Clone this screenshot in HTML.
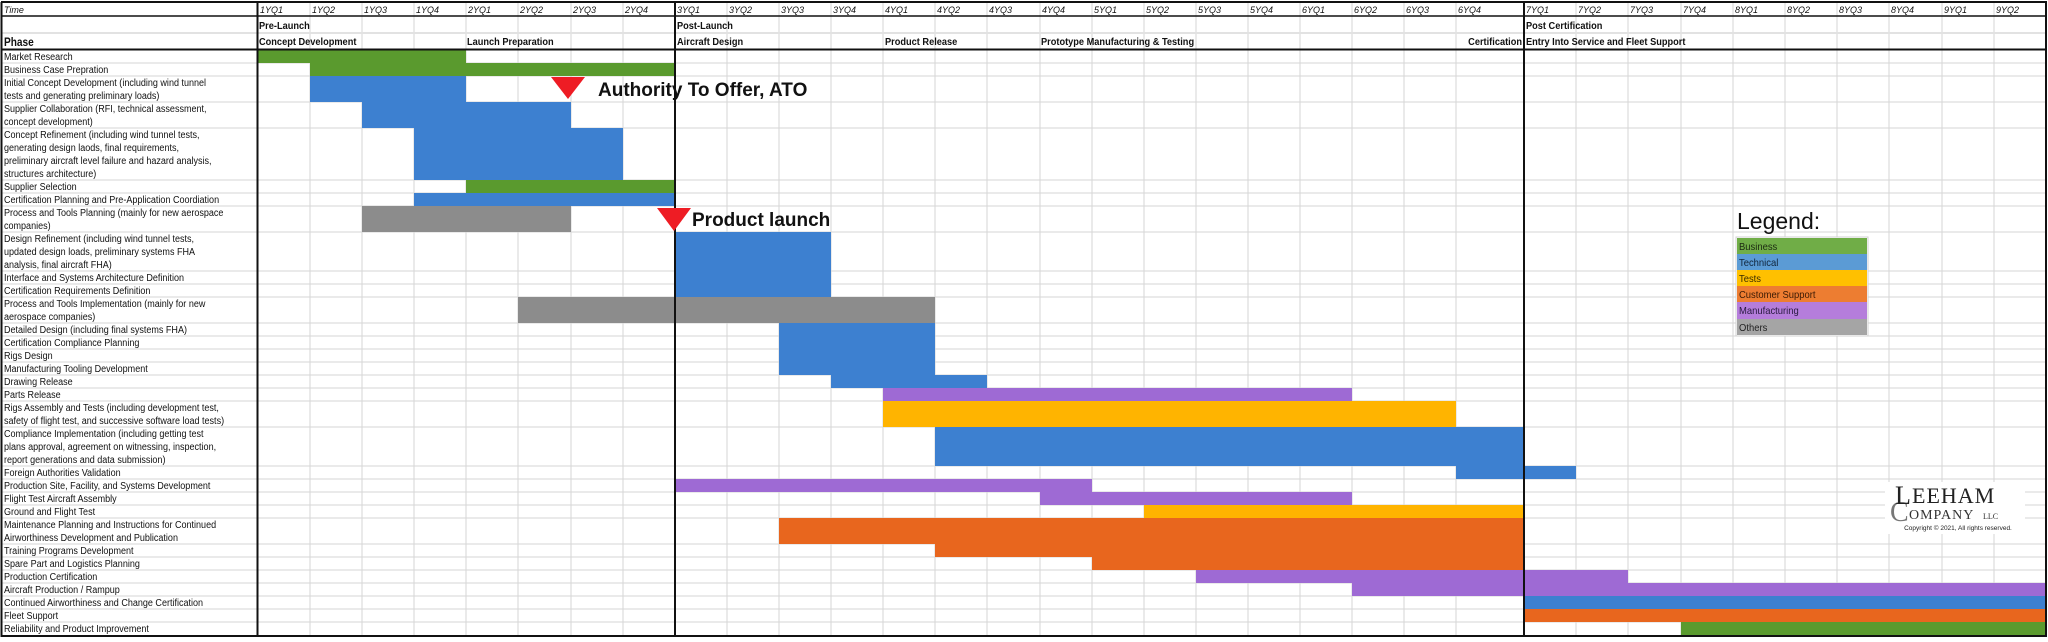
<!DOCTYPE html>
<html><head><meta charset="utf-8"><style>
html,body{margin:0;padding:0;background:#fff;width:2048px;height:642px;overflow:hidden}
svg text{font-family:"Liberation Sans",Arial,sans-serif;fill:#111}
.l{font-size:10.5px}
.q{font-size:9px;font-style:italic}
.b{font-size:10.5px;font-weight:bold}
</style></head><body>
<svg width="2048" height="642" viewBox="0 0 2048 642" xmlns="http://www.w3.org/2000/svg">
<g stroke="#d6d6d6" stroke-width="1">
<path d="M310 3V636M362 3V636M414 3V636M466 3V636M518 3V636M571 3V636M623 3V636M727 3V636M779 3V636M831 3V636M883 3V636M935 3V636M987 3V636M1040 3V636M1092 3V636M1144 3V636M1196 3V636M1248 3V636M1300 3V636M1352 3V636M1404 3V636M1456 3V636M1576 3V636M1628 3V636M1681 3V636M1733 3V636M1785 3V636M1837 3V636M1889 3V636M1942 3V636M1994 3V636"/>
<path d="M2 63H2046M2 76H2046M2 102H2046M2 128H2046M2 180H2046M2 193H2046M2 206H2046M2 232H2046M2 271H2046M2 284H2046M2 297H2046M2 323H2046M2 336H2046M2 349H2046M2 362H2046M2 375H2046M2 388H2046M2 401H2046M2 427H2046M2 466H2046M2 479H2046M2 492H2046M2 505H2046M2 518H2046M2 544H2046M2 557H2046M2 570H2046M2 583H2046M2 596H2046M2 609H2046M2 622H2046"/>
</g>
<path d="M2 33H2046" stroke="#e2e2e2" stroke-width="2"/>
<g>
<rect x="258" y="50" width="208" height="13" fill="#5a9a2e"/>
<rect x="310" y="63" width="365" height="13" fill="#5a9a2e"/>
<rect x="310" y="76" width="156" height="26" fill="#3d80d0"/>
<rect x="362" y="102" width="209" height="26" fill="#3d80d0"/>
<rect x="414" y="128" width="209" height="52" fill="#3d80d0"/>
<rect x="466" y="180" width="209" height="13" fill="#5a9a2e"/>
<rect x="414" y="193" width="261" height="13" fill="#3d80d0"/>
<rect x="362" y="206" width="209" height="26" fill="#8c8c8c"/>
<rect x="675" y="232" width="156" height="65" fill="#3d80d0"/>
<rect x="518" y="297" width="417" height="26" fill="#8c8c8c"/>
<rect x="779" y="323" width="156" height="52" fill="#3d80d0"/>
<rect x="831" y="375" width="156" height="13" fill="#3d80d0"/>
<rect x="883" y="388" width="469" height="13" fill="#9e6ad4"/>
<rect x="883" y="401" width="573" height="26" fill="#ffb400"/>
<rect x="935" y="427" width="589" height="39" fill="#3d80d0"/>
<rect x="1456" y="466" width="120" height="13" fill="#3d80d0"/>
<rect x="675" y="479" width="417" height="13" fill="#9e6ad4"/>
<rect x="1040" y="492" width="312" height="13" fill="#9e6ad4"/>
<rect x="1144" y="505" width="380" height="13" fill="#ffb400"/>
<rect x="779" y="518" width="745" height="26" fill="#e8661e"/>
<rect x="935" y="544" width="589" height="13" fill="#e8661e"/>
<rect x="1092" y="557" width="432" height="13" fill="#e8661e"/>
<rect x="1196" y="570" width="432" height="13" fill="#9e6ad4"/>
<rect x="1352" y="583" width="694" height="13" fill="#9e6ad4"/>
<rect x="1524" y="596" width="522" height="13" fill="#3d80d0"/>
<rect x="1524" y="609" width="522" height="13" fill="#e8661e"/>
<rect x="1681" y="622" width="365" height="13" fill="#5a9a2e"/>
</g>
<g stroke="#111" fill="none">
<path d="M1 2H2047M1 636H2047" stroke-width="2"/>
<path d="M1 16H2047" stroke-width="1.5"/>
<path d="M1 49.5H2047" stroke-width="2"/>
<path d="M1.5 2V637M257.5 2V637M675 2V637M1524 2V637M2046 2V637" stroke-width="2"/>
</g>
<polygon points="551,77 585,77 568,99" fill="#ee1c24"/>
<text x="598" y="96" style="font-size:19px;font-weight:bold">Authority To Offer, ATO</text>
<polygon points="657,208 691,208 674,231" fill="#ee1c24"/>
<text x="692" y="226" style="font-size:19px;font-weight:bold">Product launch</text>
<g class="q">
<text x="260" y="13">1YQ1</text><text x="312" y="13">1YQ2</text><text x="364" y="13">1YQ3</text><text x="416" y="13">1YQ4</text>
<text x="468" y="13">2YQ1</text><text x="520" y="13">2YQ2</text><text x="573" y="13">2YQ3</text><text x="625" y="13">2YQ4</text>
<text x="677" y="13">3YQ1</text><text x="729" y="13">3YQ2</text><text x="781" y="13">3YQ3</text><text x="833" y="13">3YQ4</text>
<text x="885" y="13">4YQ1</text><text x="937" y="13">4YQ2</text><text x="989" y="13">4YQ3</text><text x="1042" y="13">4YQ4</text>
<text x="1094" y="13">5YQ1</text><text x="1146" y="13">5YQ2</text><text x="1198" y="13">5YQ3</text><text x="1250" y="13">5YQ4</text>
<text x="1302" y="13">6YQ1</text><text x="1354" y="13">6YQ2</text><text x="1406" y="13">6YQ3</text><text x="1458" y="13">6YQ4</text>
<text x="1526" y="13">7YQ1</text><text x="1578" y="13">7YQ2</text><text x="1630" y="13">7YQ3</text><text x="1683" y="13">7YQ4</text>
<text x="1735" y="13">8YQ1</text><text x="1787" y="13">8YQ2</text><text x="1839" y="13">8YQ3</text><text x="1891" y="13">8YQ4</text>
<text x="1944" y="13">9YQ1</text><text x="1996" y="13">9YQ2</text>
<text x="4" y="13">Time</text>
</g>
<g class="b">
<text transform="translate(259,29) scale(.88,1)">Pre-Launch</text>
<text transform="translate(677,29) scale(.88,1)">Post-Launch</text>
<text transform="translate(1526,29) scale(.88,1)">Post Certification</text>
<text transform="translate(4,46) scale(.88,1)" style="font-size:11.5px">Phase</text>
<text transform="translate(259,45) scale(.88,1)">Concept Development</text>
<text transform="translate(467,45) scale(.88,1)">Launch Preparation</text>
<text transform="translate(677,45) scale(.88,1)">Aircraft Design</text>
<text transform="translate(885,45) scale(.88,1)">Product Release</text>
<text transform="translate(1041,45) scale(.88,1)">Prototype Manufacturing &amp; Testing</text>
<text transform="translate(1522,45) scale(.88,1)" text-anchor="end">Certification</text>
<text transform="translate(1526,45) scale(.88,1)">Entry Into Service and Fleet Support</text>
</g>
<g class="l" transform="translate(4,0) scale(.86,1)">
<text x="0" y="60">Market Research</text>
<text x="0" y="73">Business Case Prepration</text>
<text x="0" y="86">Initial Concept Development (including wind tunnel</text>
<text x="0" y="99">tests and generating preliminary loads)</text>
<text x="0" y="112">Supplier Collaboration (RFI, technical assessment,</text>
<text x="0" y="125">concept development)</text>
<text x="0" y="138">Concept Refinement (including wind tunnel tests,</text>
<text x="0" y="151">generating design laods, final requirements,</text>
<text x="0" y="164">preliminary aircraft level failure and hazard analysis,</text>
<text x="0" y="177">structures architecture)</text>
<text x="0" y="190">Supplier Selection</text>
<text x="0" y="203">Certification Planning and Pre-Application Coordiation</text>
<text x="0" y="216">Process and Tools Planning (mainly for new aerospace</text>
<text x="0" y="229">companies)</text>
<text x="0" y="242">Design Refinement (including wind tunnel tests,</text>
<text x="0" y="255">updated design loads, preliminary systems FHA</text>
<text x="0" y="268">analysis, final aircraft FHA)</text>
<text x="0" y="281">Interface and Systems Architecture Definition</text>
<text x="0" y="294">Certification Requirements Definition</text>
<text x="0" y="307">Process and Tools Implementation (mainly for new</text>
<text x="0" y="320">aerospace companies)</text>
<text x="0" y="333">Detailed Design (including final systems FHA)</text>
<text x="0" y="346">Certification Compliance Planning</text>
<text x="0" y="359">Rigs Design</text>
<text x="0" y="372">Manufacturing Tooling Development</text>
<text x="0" y="385">Drawing Release</text>
<text x="0" y="398">Parts Release</text>
<text x="0" y="411">Rigs Assembly and Tests (including development test,</text>
<text x="0" y="424">safety of flight test, and successive software load tests)</text>
<text x="0" y="437">Compliance Implementation (including getting test</text>
<text x="0" y="450">plans approval, agreement on witnessing, inspection,</text>
<text x="0" y="463">report generations and data submission)</text>
<text x="0" y="476">Foreign Authorities Validation</text>
<text x="0" y="489">Production Site, Facility, and Systems Development</text>
<text x="0" y="502">Flight Test Aircraft Assembly</text>
<text x="0" y="515">Ground and Flight Test</text>
<text x="0" y="528">Maintenance Planning and Instructions for Continued</text>
<text x="0" y="541">Airworthiness Development and Publication</text>
<text x="0" y="554">Training Programs Development</text>
<text x="0" y="567">Spare Part and Logistics Planning</text>
<text x="0" y="580">Production Certification</text>
<text x="0" y="593">Aircraft Production / Rampup</text>
<text x="0" y="606">Continued Airworthiness and Change Certification</text>
<text x="0" y="619">Fleet Support</text>
<text x="0" y="632">Reliability and Product Improvement</text>
</g>
<text x="1737" y="229" style="font-size:23px">Legend:</text>
<rect x="1736" y="237" width="132" height="99" fill="#fff" stroke="#d0d0d0"/>
<rect x="1737" y="238" width="130" height="16" fill="#70ad47"/>
<rect x="1737" y="254" width="130" height="16" fill="#5b9bd5"/>
<rect x="1737" y="270" width="130" height="16" fill="#ffc000"/>
<rect x="1737" y="286" width="130" height="16" fill="#ed7d31"/>
<rect x="1737" y="302" width="130" height="17" fill="#b57ddb"/>
<rect x="1737" y="319" width="130" height="16" fill="#a5a5a5"/>
<g style="font-size:10.5px">
<text transform="translate(1739,250) scale(.9,1)" style="fill:#1c2a12">Business</text>
<text transform="translate(1739,266) scale(.9,1)" style="fill:#10243a">Technical</text>
<text transform="translate(1739,282) scale(.9,1)" style="fill:#3a2c00">Tests</text>
<text transform="translate(1739,298) scale(.9,1)" style="fill:#3a1a05">Customer Support</text>
<text transform="translate(1739,314) scale(.9,1)" style="fill:#281a40">Manufacturing</text>
<text transform="translate(1739,331) scale(.9,1)" style="fill:#222">Others</text>
</g>
<rect x="1885" y="482" width="140" height="52" fill="#fff"/>
<text x="1890" y="521" style="font-family:'Liberation Serif',serif;font-size:28px;fill:#777">C</text>
<text x="1895" y="504" style="font-family:'Liberation Serif',serif;font-size:26px;fill:#222">L</text>
<text x="1912" y="503" style="font-family:'Liberation Serif',serif;font-size:22px;fill:#222;letter-spacing:1px">EEHAM</text>
<text x="1909" y="519" style="font-family:'Liberation Serif',serif;font-size:14px;fill:#333;letter-spacing:1px">OMPANY</text>
<text x="1983" y="519" style="font-family:'Liberation Serif',serif;font-size:8px;fill:#333">LLC</text>
<text x="1958" y="530" text-anchor="middle" style="font-size:6.5px;fill:#222">Copyright © 2021, All rights reserved.</text>
</svg>
</body></html>
